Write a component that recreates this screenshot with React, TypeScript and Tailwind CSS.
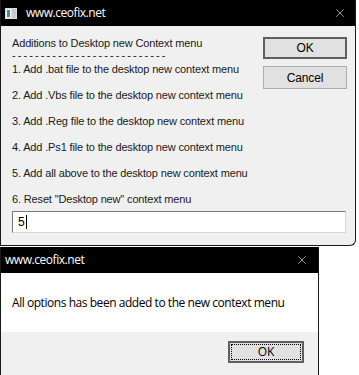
import { X } from "lucide-react";

const menuItems = [
  "1. Add .bat file to the desktop new context menu",
  "2. Add .Vbs file to the desktop new context menu",
  "3. Add .Reg file to the desktop new context menu",
  "4. Add .Ps1 file to the desktop new context menu",
  "5. Add all above to the desktop new context menu",
  '6. Reset "Desktop new" context menu',
];

function AppIcon() {
  return (
    <svg width="12" height="11" viewBox="0 0 12 11" className="shrink-0">
      <rect x="0" y="0" width="12" height="11" fill="#d9dcdc" />
      <rect x="1" y="1" width="5" height="9" fill="#f4f6f6" />
      <rect x="2" y="2" width="3" height="7" fill="#3f8f8a" />
      <rect x="7" y="1" width="4" height="9" fill="#c6caca" />
    </svg>
  );
}

export default function App() {
  return (
    <div className="h-[375px] w-[359px] overflow-hidden bg-white">
      {/* first dialog */}
      <div className="h-[246px] w-[356px] rounded-br-[6px] border-b border-r border-l border-[#1a1a1a] bg-[#f0f0f0]">
        <div className="flex h-[26px] items-center bg-black pl-[4px] pr-[8px] font-['Open_Sans',sans-serif] text-[12px] text-white">
          <AppIcon />
          <span className="ml-[9px] tracking-[-0.45px]">www.ceofix.net</span>
          <X className="ml-auto h-[14px] w-[14px]" strokeWidth={1} />
        </div>
        <div className="flex pl-[11px] pr-[8px] pt-[10px] font-['Liberation_Sans',Arial,sans-serif] text-[11px] tracking-[-0.15px] text-[#1a1a1a]">
          <div className="flex flex-1 flex-col">
            <div className="leading-[14px]">Additions to Desktop new Context menu</div>
            <div className="h-[12px] leading-[10px] tracking-[2.1px]">---------------------------</div>
            {menuItems.map(item => (
              <div key={item} className="h-[26px] leading-[14px]">
                {item}
              </div>
            ))}
          </div>
          <div className="flex w-[84px] flex-col gap-[7px] pt-[1px]">
            <button className="h-[22px] border-2 border-[#5f5f5f] bg-[#e1e1e1] text-[12px] leading-none text-black">
              OK
            </button>
            <button className="h-[23px] border border-[#adadad] bg-[#e1e1e1] text-[12px] leading-none text-black">
              Cancel
            </button>
          </div>
        </div>
        <div className="ml-[11px] mr-[9px] mt-[-7px] flex h-[22px] items-center border border-t-[#7a7a7a] border-l-[#7a7a7a] border-r-[#d8d8d8] border-b-[#d8d8d8] bg-white pl-[5px] font-['Liberation_Sans',Arial,sans-serif] text-[12px] text-black">
          5<span className="ml-[1px] h-[14px] w-px bg-black" />
        </div>
      </div>
      {/* second dialog */}
      <div className="mt-[1px] h-[128px] w-[319px] border-r border-l border-[#1a1a1a] bg-[#f0f0f0]">
        <div className="flex h-[26px] items-center bg-black pl-[4px] pr-[9px] font-['Open_Sans',sans-serif] text-[12px] text-white">
          <span className="tracking-[-0.45px]">www.ceofix.net</span>
          <X className="ml-auto h-[14px] w-[14px]" strokeWidth={1} />
        </div>
        <div className="flex h-[59px] items-center bg-white pl-[11px] font-['Open_Sans',sans-serif] text-[12px] font-medium tracking-[-0.45px] text-black">
          All options has been added to the new context menu
        </div>
        <div className="flex justify-end pr-[14px] pt-[9px]">
          <button className="flex h-[22px] w-[76px] items-center justify-center border-2 border-[#5f5f5f] bg-[#e1e1e1] p-[1px]">
            <span className="flex h-full w-full items-center justify-center border border-dotted border-black font-['Open_Sans',sans-serif] text-[12px] text-black">
              OK
            </span>
          </button>
        </div>
      </div>
    </div>
  );
}
